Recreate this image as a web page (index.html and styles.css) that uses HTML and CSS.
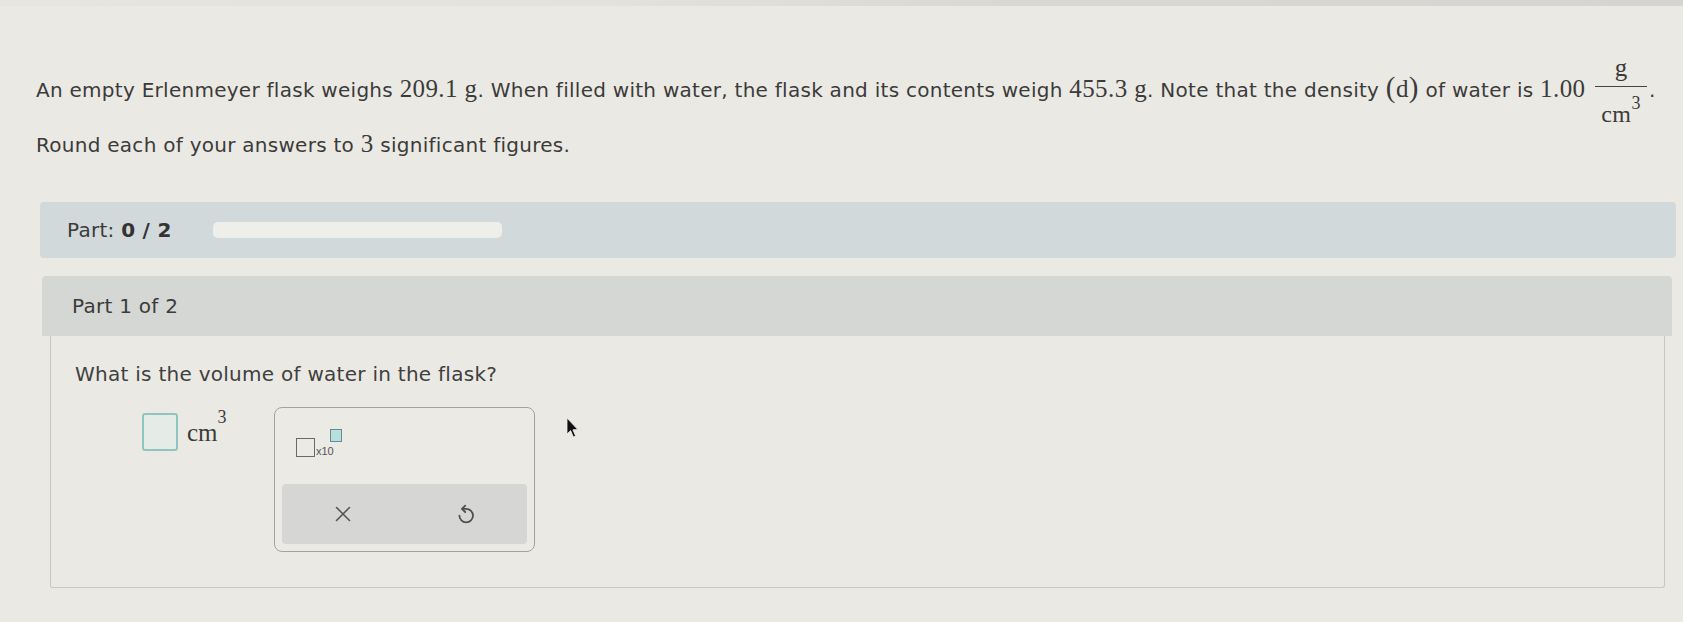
FILE: index.html
```html
<!DOCTYPE html>
<html>
<head>
<meta charset="utf-8">
<link rel="stylesheet" href="styles.css">
</head>
<body>
<div class="topband"></div>
<main class="page">
  <p class="intro">An empty Erlenmeyer flask weighs <span class="m">209.1&nbsp;g</span>. When filled with water, the flask and its contents weigh <span class="m">455.3&nbsp;g</span>. Note that the density <span class="m"><span class="paren">(</span>d<span class="paren">)</span></span> of water is <span class="m">1.00</span> <span class="frac m"><span class="num">g</span><span class="den">cm<sup>3</sup></span></span>.</p>
  <p class="round">Round each of your answers to <span class="m">3</span> significant figures.</p>
  <div class="partbar">
    <span class="partlabel">Part: <b>0 / 2</b></span>
    <div class="progress"></div>
  </div>
  <section class="card">
    <div class="cardhead">Part 1 of 2</div>
    <div class="cardbody">
      <p class="question">What is the volume of water in the flask?</p>
      <div class="answer-row">
        <div class="answer">
          <span class="inbox"></span>
          <span class="unit">cm<sup>3</sup></span>
        </div>
        <div class="tools">
          <div class="sci">
            <span class="sq"></span><span class="x10">x10</span><span class="sqsup"></span>
          </div>
          <div class="btnbar">
            <button class="btn" aria-label="clear">
              <svg width="20" height="20" viewBox="0 0 20 20"><path d="M3.5 3.5 L16.5 16.5 M16.5 3.5 L3.5 16.5" stroke="#555" stroke-width="1.6" fill="none" stroke-linecap="round"/></svg>
            </button>
            <button class="btn" aria-label="undo">
              <svg width="22" height="22" viewBox="0 0 22 22"><path d="M4.4 12.6 A6.8 6.8 0 1 0 11.2 5.8 L7.2 5.8" stroke="#4f4f4f" stroke-width="1.8" fill="none" stroke-linecap="round" stroke-linejoin="round"/><path d="M10.2 2.6 L7 5.8 L10.2 9" stroke="#4f4f4f" stroke-width="1.8" fill="none" stroke-linecap="round" stroke-linejoin="round"/></svg>
            </button>
          </div>
        </div>
      </div>
    </div>
  </section>
</main>
<svg class="cursor" width="14" height="22" viewBox="0 0 14 22"><path d="M1 1 L1 17 L4.6 13.6 L7.4 20 L9.6 19 L6.9 12.8 L11.8 12.6 Z" fill="#111" stroke="#eee" stroke-width="0.8"/></svg>
</body>
</html>
```
FILE: styles.css
```css
html, body {
  margin: 0;
  padding: 0;
}
body {
  width: 1683px;
  height: 622px;
  overflow: hidden;
  position: relative;
  background: #ebe9e3;
  font-family: "DejaVu Sans", sans-serif;
  font-size: 20px;
  letter-spacing: 0.27px;
  color: #3b3b3b;
}
.topband {
  height: 6px;
  background: linear-gradient(to right, #e6e5e0 0%, #e2e2de 35%, #d8d8d4 60%, #d4d5d2 100%);
}
.page {
  padding: 69px 0 0 36px;
}
.m {
  font-family: "Liberation Serif", "Times New Roman", serif;
  font-size: 25px;
  letter-spacing: 0.4px;
}
.paren {
  font-size: 29px;
  font-weight: 300;
}
p {
  margin: 0;
}
.intro {
  line-height: 24px;
  white-space: nowrap;
}
.frac {
  display: inline-flex;
  flex-direction: column;
  align-items: center;
  vertical-align: 21px;
  line-height: 22px;
  margin: -40px 2px -40px 3px;
}
.frac .num {
  padding: 0 2px 7px;
  border-bottom: 1.2px solid #444;
  width: 48px;
  text-align: center;
}
.frac .den {
  padding-top: 16px;
  font-size: 24px;
}
.frac sup, .unit sup {
  font-size: 18px;
  vertical-align: 13px;
  line-height: 0;
}
.round {
  margin-top: 30px;
  line-height: 24px;
}
.partbar {
  margin: 45px 7px 0 4px;
  height: 56px;
  background: #d2d9da;
  border-radius: 4px;
  display: flex;
  align-items: center;
  padding-left: 27px;
}
.partlabel {
  width: 146px;
}
.partlabel b {
  font-weight: bold;
  color: #333;
}
.progress {
  width: 289px;
  height: 16px;
  border-radius: 5px;
  background: #eeeeea;
}
.card {
  margin: 18px 11px 0 6px;
}
.cardhead {
  height: 60px;
  background: #d5d7d4;
  border-radius: 4px 4px 0 0;
  display: flex;
  align-items: center;
  padding-left: 30px;
}
.cardbody {
  margin: 0 7px 0 8px;
  height: 252px;
  border: 1px solid #c7c7c3;
  border-top: none;
  border-radius: 0 0 3px 3px;
  padding: 26px 0 0 24px;
  box-sizing: border-box;
}
.question {
  line-height: 24px;
  color: #404040;
}
.answer-row {
  display: flex;
  align-items: flex-start;
  margin-top: 21px;
  margin-left: 67px;
}
.answer {
  width: 132px;
  display: flex;
  align-items: flex-start;
  padding-top: 6px;
}
.inbox {
  width: 36px;
  height: 38px;
  box-sizing: border-box;
  border: 2px solid #8fc4c0;
  border-radius: 3px;
  background: #e5ebe6;
}
.unit {
  font-family: "Liberation Serif", "Times New Roman", serif;
  font-size: 25px;
  letter-spacing: 0;
  margin-left: 9px;
  margin-top: 4px;
  line-height: 26px;
  color: #3b3b3b;
}
.unit sup {
  vertical-align: 18px;
}
.tools {
  width: 261px;
  height: 145px;
  box-sizing: border-box;
  border: 1.5px solid #a2a29e;
  border-radius: 8px;
  background: #eceae5;
  padding: 21px 7px 7px 7px;
  display: flex;
  flex-direction: column;
  justify-content: space-between;
}
.sci {
  display: flex;
  align-items: flex-end;
  margin-left: 14px;
  height: 28px;
}
.sq {
  width: 19px;
  height: 19px;
  box-sizing: border-box;
  border: 1.5px solid #6a6a6a;
  display: block;
}
.x10 {
  font-family: "Liberation Sans", Arial, sans-serif;
  font-size: 11px;
  letter-spacing: 0;
  line-height: 11px;
  color: #555;
  margin-left: 1px;
}
.sqsup {
  width: 12px;
  height: 13px;
  box-sizing: border-box;
  border: 1.5px solid #5f8f95;
  background: #b9dfdc;
  display: block;
  align-self: flex-start;
  margin-left: -4px;
}
.btnbar {
  height: 60px;
  background: #d6d7d4;
  border-radius: 4px;
  display: flex;
}
.btn {
  flex: 1;
  border: none;
  background: transparent;
  display: flex;
  align-items: center;
  justify-content: center;
  padding: 0;
}
.cursor {
  position: absolute;
  left: 566px;
  top: 417px;
}
```
